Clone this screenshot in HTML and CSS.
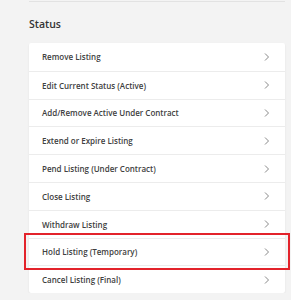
FILE: index.html
```html
<!DOCTYPE html>
<html lang="en">

<head>
    <meta charset="UTF-8">
    <meta name="viewport" content="width=device-width, initial-scale=1.0">
    <title>Status</title>
    <link rel="stylesheet" href="styles.css">
</head>

<body>
    <div class="panel">
        <h2 class="section-title">Status</h2>

        <!-- Lista de acciones -->
        <ul class="action-list">
            <li class="action-row"><span>Remove Listing</span><i class="chevron"></i></li>
            <li class="action-row"><span>Edit Current Status (Active)</span><i class="chevron"></i></li>
            <li class="action-row"><span>Add/Remove Active Under Contract</span><i class="chevron"></i></li>
            <li class="action-row"><span>Extend or Expire Listing</span><i class="chevron"></i></li>
            <li class="action-row"><span>Pend Listing (Under Contract)</span><i class="chevron"></i></li>
            <li class="action-row"><span>Close Listing</span><i class="chevron"></i></li>
            <li class="action-row"><span>Withdraw Listing</span><i class="chevron"></i></li>
            <li class="action-row highlighted"><span>Hold Listing (Temporary)</span><i class="chevron"></i></li>
            <li class="action-row"><span>Cancel Listing (Final)</span><i class="chevron"></i></li>
        </ul>
    </div>
</body>

</html>
```

FILE: styles.css
```css
/* Estilos generales */
body {
    margin: 0;
    background-color: #f3f3f3;
    font-family: 'Open Sans', 'Noto Sans', sans-serif;
    color: #3d3d3d;
}

.panel {
    width: 256px;
    margin-left: 29px;
    border-top: 1px solid #e2e2e2;
    margin-top: 1px;
}

.section-title {
    margin: 0;
    padding-top: 15px;
    height: 27px;
    box-sizing: border-box;
    font-size: 10.5px;
    font-weight: 600;
    line-height: 14px;
    color: #333;
}

/* Lista */
.action-list {
    list-style: none;
    margin: 0;
    padding: 0;
    background-color: #fff;
    border-radius: 2px;
    box-shadow: 0 1px 2px rgba(0, 0, 0, 0.08);
    margin-top: 14px;
}

.action-row {
    position: relative;
    display: flex;
    align-items: center;
    justify-content: space-between;
    height: 27.8px;
    box-sizing: border-box;
    padding: 0 15px 0 13px;
    border-top: 1px solid #ececec;
    font-size: 8px;
    font-weight: 600;
    color: #404040;
}

.action-row:first-child {
    border-top: none;
}

.chevron {
    width: 7px;
    height: 8px;
    background: no-repeat center / 7px 8px
        url("data:image/svg+xml,%3Csvg xmlns='http://www.w3.org/2000/svg' viewBox='0 0 7 8'%3E%3Cpath d='M2 0.5 L5.5 4 L2 7.5' fill='none' stroke='%23888' stroke-width='1'/%3E%3C/svg%3E");
}

/* Recuadro rojo */
.highlighted::after {
    content: "";
    position: absolute;
    left: -5px;
    right: -5px;
    top: -6px;
    bottom: -5px;
    border: 2px solid #e3232b;
}
```
